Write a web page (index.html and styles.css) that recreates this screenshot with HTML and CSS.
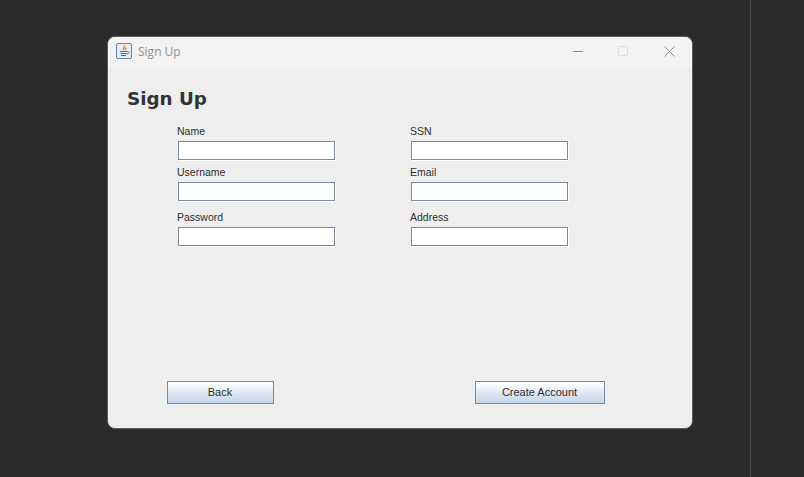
FILE: index.html
```html
<!DOCTYPE html>
<html lang="en">
<head>
<meta charset="utf-8">
<title>Sign Up</title>
<link rel="stylesheet" href="styles.css">
</head>
<body>
<div class="divider"></div>
<main class="window">
  <header class="titlebar">
    <svg class="app-icon" width="16" height="16" viewBox="0 0 16 16">
      <rect x="0.5" y="0.5" width="15" height="15" rx="1.5" fill="#e6edf3" stroke="#5f87a6"/>
      <path d="M8.5 2.5c1 1.500-2 2.500-1 4.500M10 4.500c.5 1-1.500 1.500-.8 2.800" fill="none" stroke="#e8791a" stroke-width="1.300"/>
      <path d="M4 8.500h7M4.500 10.500h6M5 12.500h5" stroke="#3f6f95" stroke-width="1"/>
      <path d="M11 8.500c2.500-.5 2.500 2.500-.5 2.500" fill="none" stroke="#3f6f95" stroke-width="1"/>
    </svg>
    <span class="title">Sign Up</span>
    <div class="controls">
      <svg width="10" height="10" viewBox="0 0 10 10"><path d="M0 5.500h10" stroke="#8f8f8f"/></svg>
      <svg width="10" height="10" viewBox="0 0 10 10"><rect x="0.500" y="0.500" width="9" height="9" rx="1" fill="none" stroke="#dcdcdc"/></svg>
      <svg class="close" width="11" height="11" viewBox="0 0 11 11"><path d="M.5.500l10 10M10.500.500l-10 10" stroke="#8c8c8c"/></svg>
    </div>
  </header>
  <section class="content">
    <h1 class="heading">Sign Up</h1>
    <div class="form">
      <div class="field first"><label class="label">Name</label><input class="input" type="text"></div>
      <div class="field first"><label class="label">SSN</label><input class="input" type="text"></div>
      <div class="field second"><label class="label">Username</label><input class="input" type="text"></div>
      <div class="field second"><label class="label">Email</label><input class="input" type="text"></div>
      <div class="field third"><label class="label">Password</label><input class="input" type="text"></div>
      <div class="field third"><label class="label">Address</label><input class="input" type="text"></div>
    </div>
    <div class="actions">
      <button class="button back" type="button">Back</button>
      <button class="button create" type="button">Create Account</button>
    </div>
  </section>
</main>
</body>
</html>
```

FILE: styles.css
```css
* { box-sizing: border-box; }
html, body { margin: 0; height: 100%; }
body {
  position: relative;
  background: #2b2b2b;
  padding: 36px 0 0 107px;
  overflow: hidden;
  font-family: "Liberation Sans", sans-serif;
  font-size: 10.500px;
  color: #2e2e2e;
}
.divider {
  position: absolute;
  left: 750px;
  top: 0;
  bottom: 0;
  width: 1px;
  background: #4c4c4c;
}
.window {
  width: 586px;
  height: 393px;
  display: flex;
  flex-direction: column;
  border: 1px solid #5a5a5a;
  border-radius: 8px;
  overflow: hidden;
  background: #eeeeee;
}
.titlebar {
  height: 30px;
  flex: none;
  display: flex;
  align-items: center;
  padding: 0 0 2px 8px;
  background: #f3f3f3;
}
.app-icon { flex: none; }
.title { margin-left: 6px; font-family: "Open Sans", sans-serif; font-size: 12px; color: #909090; }
.controls {
  margin-left: auto;
  margin-right: 17px;
  display: flex;
  align-items: center;
  gap: 35px;
}
.close { margin-left: 1px; }
.content { flex: 1; display: flex; flex-direction: column; }
.heading {
  margin: 20px 0 0 19px;
  font-family: "DejaVu Sans", sans-serif;
  font-size: 18.300px;
  line-height: 24px;
  font-weight: 700;
  color: #333;
}
.form {
  margin: 13px 0 0 69px;
  display: grid;
  grid-template-columns: 233px 158px;
  align-items: start;
}
.field { display: flex; flex-direction: column; }
.label { height: 15px; line-height: 14px; white-space: nowrap; }
.input {
  margin: 2px 0 0 1px;
  width: 157px;
  height: 19px;
  padding: 0;
  background: #fff;
  border: 1px solid #7b8a99;
  border-radius: 0;
  box-shadow: 1px 1px 0 #fff;
  outline: 0;
}
.second { margin-top: 5px; }
.third { margin-top: 9px; }
.actions {
  margin: auto 87px 24px 59px;
  display: flex;
  justify-content: space-between;
}
.button {
  height: 23px;
  padding: 0 1px 2px 0;
  border: 1px solid #7a8a99;
  border-radius: 0;
  background: linear-gradient(#ffffff 0%, #f7f9fc 18%, #dfe8f3 50%, #c4d6e8 100%);
  color: #2e2e2e;
  font-family: "Liberation Sans", sans-serif;
  font-size: 11px;
}
.back { width: 107px; }
.create { width: 130px; }
```
